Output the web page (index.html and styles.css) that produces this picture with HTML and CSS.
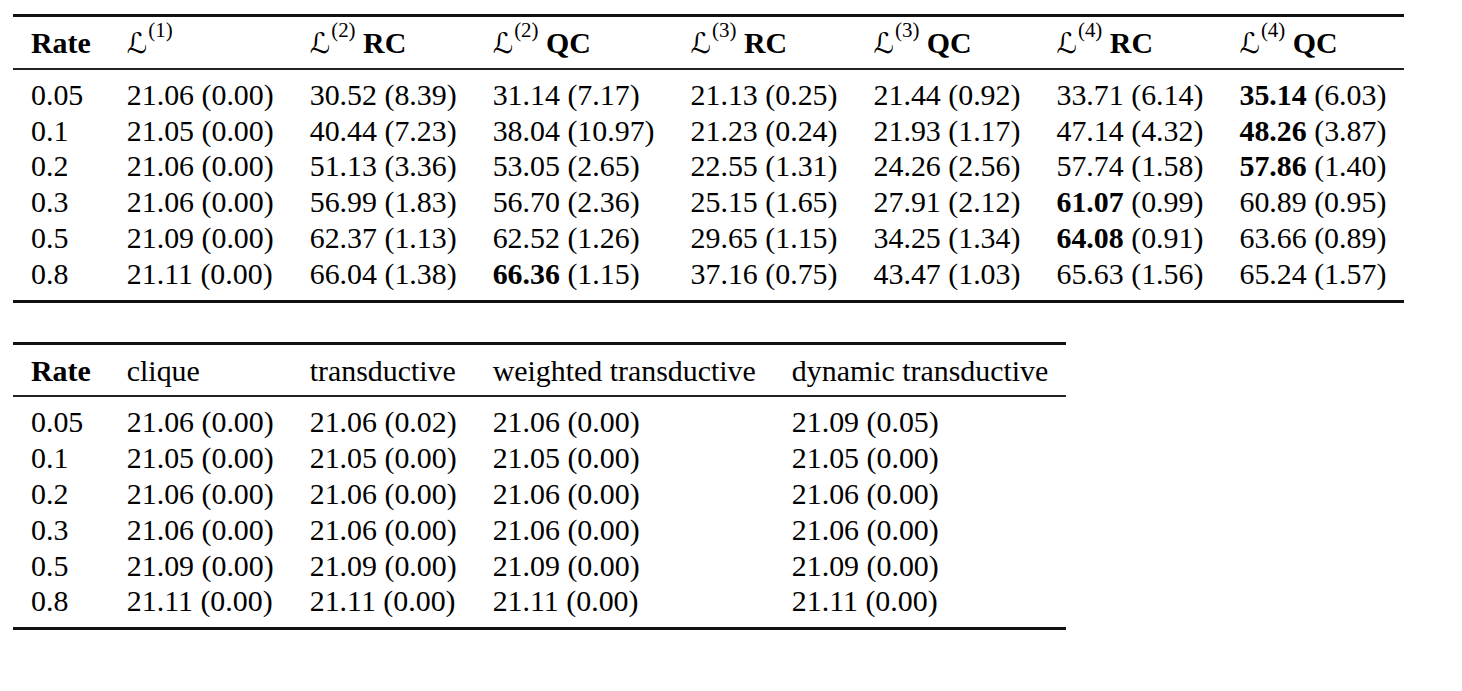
FILE: index.html
```html
<!DOCTYPE html>
<html lang="en">
<head>
<meta charset="utf-8">
<title>Results</title>
<link rel="stylesheet" href="styles.css">
</head>
<body>
<table class="results">
  <thead>
    <tr>
      <th class="strong">Rate</th>
      <th><span class="cal">ℒ</span><sup>(1)</sup></th>
      <th><span class="cal">ℒ</span><sup>(2)</sup> <b>RC</b></th>
      <th><span class="cal">ℒ</span><sup>(2)</sup> <b>QC</b></th>
      <th><span class="cal">ℒ</span><sup>(3)</sup> <b>RC</b></th>
      <th><span class="cal">ℒ</span><sup>(3)</sup> <b>QC</b></th>
      <th><span class="cal">ℒ</span><sup>(4)</sup> <b>RC</b></th>
      <th><span class="cal">ℒ</span><sup>(4)</sup> <b>QC</b></th>
    </tr>
  </thead>
  <tbody>
    <tr><td>0.05</td><td>21.06 (0.00)</td><td>30.52 (8.39)</td><td>31.14 (7.17)</td><td>21.13 (0.25)</td><td>21.44 (0.92)</td><td>33.71 (6.14)</td><td><b>35.14</b> (6.03)</td></tr>
    <tr><td>0.1</td><td>21.05 (0.00)</td><td>40.44 (7.23)</td><td>38.04 (10.97)</td><td>21.23 (0.24)</td><td>21.93 (1.17)</td><td>47.14 (4.32)</td><td><b>48.26</b> (3.87)</td></tr>
    <tr><td>0.2</td><td>21.06 (0.00)</td><td>51.13 (3.36)</td><td>53.05 (2.65)</td><td>22.55 (1.31)</td><td>24.26 (2.56)</td><td>57.74 (1.58)</td><td><b>57.86</b> (1.40)</td></tr>
    <tr><td>0.3</td><td>21.06 (0.00)</td><td>56.99 (1.83)</td><td>56.70 (2.36)</td><td>25.15 (1.65)</td><td>27.91 (2.12)</td><td><b>61.07</b> (0.99)</td><td>60.89 (0.95)</td></tr>
    <tr><td>0.5</td><td>21.09 (0.00)</td><td>62.37 (1.13)</td><td>62.52 (1.26)</td><td>29.65 (1.15)</td><td>34.25 (1.34)</td><td><b>64.08</b> (0.91)</td><td>63.66 (0.89)</td></tr>
    <tr><td>0.8</td><td>21.11 (0.00)</td><td>66.04 (1.38)</td><td><b>66.36</b> (1.15)</td><td>37.16 (0.75)</td><td>43.47 (1.03)</td><td>65.63 (1.56)</td><td>65.24 (1.57)</td></tr>
  </tbody>
</table>

<table class="results">
  <thead>
    <tr>
      <th class="strong">Rate</th>
      <th>clique</th>
      <th>transductive</th>
      <th>weighted transductive</th>
      <th>dynamic transductive</th>
    </tr>
  </thead>
  <tbody>
    <tr><td>0.05</td><td>21.06 (0.00)</td><td>21.06 (0.02)</td><td>21.06 (0.00)</td><td>21.09 (0.05)</td></tr>
    <tr><td>0.1</td><td>21.05 (0.00)</td><td>21.05 (0.00)</td><td>21.05 (0.00)</td><td>21.05 (0.00)</td></tr>
    <tr><td>0.2</td><td>21.06 (0.00)</td><td>21.06 (0.00)</td><td>21.06 (0.00)</td><td>21.06 (0.00)</td></tr>
    <tr><td>0.3</td><td>21.06 (0.00)</td><td>21.06 (0.00)</td><td>21.06 (0.00)</td><td>21.06 (0.00)</td></tr>
    <tr><td>0.5</td><td>21.09 (0.00)</td><td>21.09 (0.00)</td><td>21.09 (0.00)</td><td>21.09 (0.00)</td></tr>
    <tr><td>0.8</td><td>21.11 (0.00)</td><td>21.11 (0.00)</td><td>21.11 (0.00)</td><td>21.11 (0.00)</td></tr>
  </tbody>
</table>
</body>
</html>
```

FILE: styles.css
```css
html, body {
  background: #ffffff;
}

body {
  margin: 0;
  padding: 14px 0 0 13px;
  font-family: "Liberation Serif", "Times New Roman", serif;
  font-size: 29.9px;
  color: #000000;
}

.results {
  border-collapse: separate;
  border-spacing: 0;
  border-top: 3px solid #111111;
  border-bottom: 3px solid #111111;
  margin-bottom: 39px;
}

.results th,
.results td {
  padding: 0 18px;
  line-height: 35.8px;
  text-align: left;
  white-space: nowrap;
  font-weight: normal;
}

.results thead th {
  padding-top: 8px;
  padding-bottom: 7px;
  border-bottom: 2px solid #222222;
}

.results tbody tr:first-child td {
  padding-top: 7px;
}

.results tbody tr:last-child td {
  padding-bottom: 8px;
}

.results th.strong,
.results b {
  font-weight: bold;
}

.cal {
  font-family: "DejaVu Sans", sans-serif;
  font-size: 0.95em;
  line-height: 1;
}

.results sup {
  font-size: 0.7em;
  line-height: 0;
  vertical-align: 16px;
  margin-left: 1px;
}
```
